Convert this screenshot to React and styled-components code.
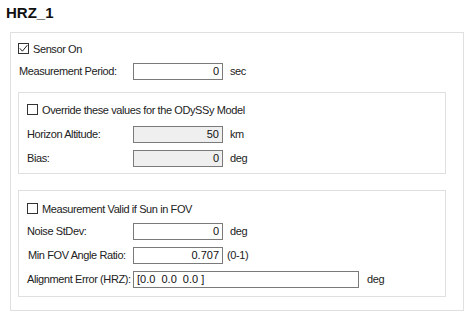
import React from "react";
import styled, { createGlobalStyle } from "styled-components";

const Global = createGlobalStyle`
  html, body { margin: 0; padding: 0; background: #fff; }
  body { font-family: "Liberation Sans", Arial, sans-serif; color: #222; }
`;

const Page = styled.div`
  width: 474px;
  height: 325px;
  box-sizing: border-box;
  padding: 4px 10px 0 10px;
  background: #fff;
`;

const Title = styled.div`
  font-size: 15px;
  font-weight: bold;
  line-height: 18px;
  height: 28px;
  margin-left: -4px;
  color: #111;
`;

const Panel = styled.div`
  border: 1px solid #e0e0e0;
  padding: ${(p) => p.$pad};
  margin: ${(p) => p.$margin || "0"};
  display: flex;
  flex-direction: column;
  background: #fff;
`;

const CheckRow = styled.label`
  display: flex;
  align-items: center;
  height: 21px;
  gap: 4px;
  font-size: 11px;
  letter-spacing: -0.4px;
`;

const Box = styled.span`
  width: 11px;
  height: 11px;
  box-sizing: border-box;
  border: 1px solid #333;
  background: #fff;
  display: flex;
  align-items: center;
  justify-content: center;
`;

const Row = styled.div`
  display: flex;
  align-items: center;
  height: 24px;
  font-size: 11px;
  letter-spacing: -0.4px;
`;

const Label = styled.span`
  width: ${(p) => p.$w}px;
  padding-left: ${(p) => p.$indent || 0}px;
  box-sizing: border-box;
  flex: none;
  white-space: nowrap;
`;

const Input = styled.div`
  width: ${(p) => p.$w || 90}px;
  height: 17px;
  box-sizing: border-box;
  border: 1px solid #7a7a7a;
  background: ${(p) => (p.$disabled ? "#efefef" : "#fff")};
  display: flex;
  align-items: center;
  justify-content: ${(p) => (p.$left ? "flex-start" : "flex-end")};
  padding: 0 3px;
  white-space: pre;
  font-size: 11px;
  letter-spacing: 0;
  color: #111;
`;

const Unit = styled.span`
  margin-left: ${(p) => p.$gap ?? 7}px;
`;

const Check = ({ checked }) => (
  <Box>
    {checked && (
      <svg width="9" height="9" viewBox="0 0 9 9">
        <path d="M0.8 4.3 L3.4 7.2 L8.3 1.2" fill="none" stroke="#222" strokeWidth="1" />
      </svg>
    )}
  </Box>
);

export default function App() {
  return (
    <Page>
      <Global />
      <Title>HRZ_1</Title>
      <Panel $pad="5px 17px 13px 7px">
        <CheckRow>
          <Check checked />
          Sensor On
        </CheckRow>
        <Row>
          <Label $w={115} $indent={1}>Measurement Period:</Label>
          <Input>0</Input>
          <Unit>sec</Unit>
        </Row>
        <Panel $pad="6px 8px 3px 8px" $margin="9px 0 0 0">
          <CheckRow>
            <Check />
            Override these values for the ODySSy Model
          </CheckRow>
          <Row style={{ marginTop: 2 }}>
            <Label $w={106}>Horizon Altitude:</Label>
            <Input $disabled>50</Input>
            <Unit>km</Unit>
          </Row>
          <Row>
            <Label $w={106}>Bias:</Label>
            <Input $disabled>0</Input>
            <Unit>deg</Unit>
          </Row>
        </Panel>
        <Panel $pad="7px 8px 5px 8px" $margin="16px 0 0 0">
          <CheckRow>
            <Check />
            Measurement Valid if Sun in FOV
          </CheckRow>
          <Row>
            <Label $w={106}>Noise StDev:</Label>
            <Input>0</Input>
            <Unit>deg</Unit>
          </Row>
          <Row>
            <Label $w={106} $indent={1}>Min FOV Angle Ratio:</Label>
            <Input>0.707</Input>
            <Unit $gap={4}>(0-1)</Unit>
          </Row>
          <Row>
            <Label $w={106}>Alignment Error (HRZ):</Label>
            <Input $w={226} $left>[0.0  0.0  0.0 ]</Input>
            <Unit $gap={8}>deg</Unit>
          </Row>
        </Panel>
      </Panel>
    </Page>
  );
}
